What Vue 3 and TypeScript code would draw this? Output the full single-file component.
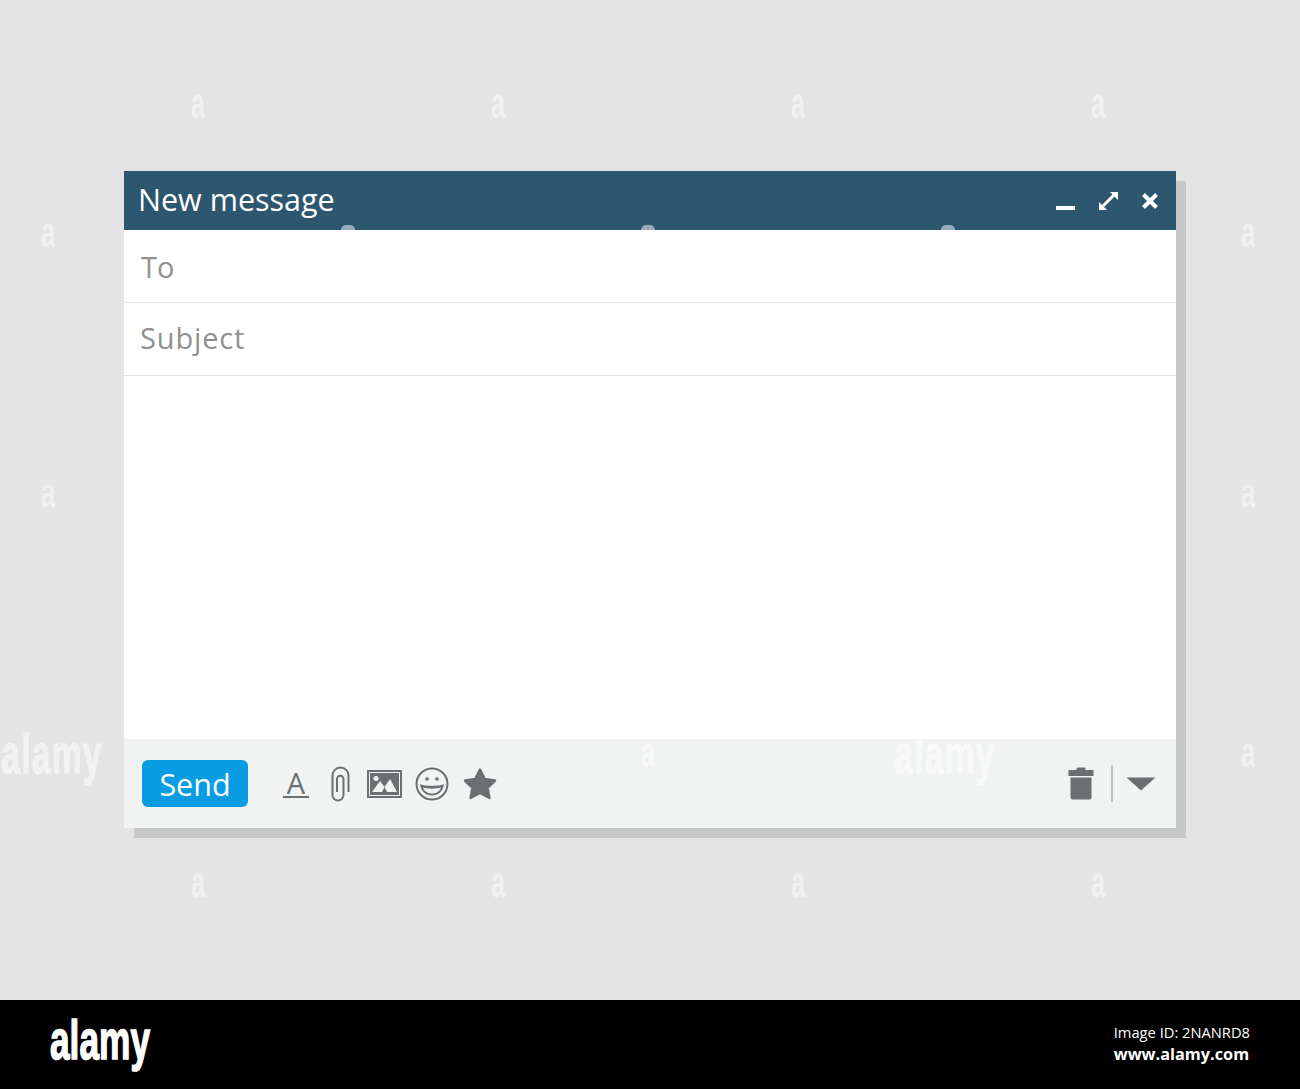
<script setup lang="ts">
interface Mark { x: number; y: number; label: string; size: number; word: boolean }
const small: [number, number][] = [
  [198, 108], [498, 108], [798, 108], [1098, 108],
  [48, 237], [1248, 237], [48, 497], [1248, 497],
  [648, 757], [1248, 757],
  [198, 887], [498, 887], [798, 887], [1098, 887],
]
const marks: Mark[] = [
  ...small.map(([x, y]) => ({ x, y: y - 4, label: 'a', size: 42, word: false })),
  { x: 52, y: 754, label: 'alamy', size: 56, word: true },
  { x: 945, y: 754, label: 'alamy', size: 56, word: true },
]
const markStyle = (m: Mark) => ({ left: `${m.x}px`, top: `${m.y}px`, fontSize: `${m.size}px` })
const dots: number[] = [217, 517, 817]
const dotStyle = (x: number) => ({ left: `${x}px` })
</script>

<template>
  <div class="page">
    <main class="stage">
      <section class="window">
        <header class="titlebar">
          <h1 class="title">New message</h1>
          <span v-for="x in dots" :key="x" class="dot" :style="dotStyle(x)"></span>
          <div class="controls">
            <svg width="20" height="20" viewBox="0 0 20 20"><rect x="0" y="15" width="19" height="4" fill="#fff" /></svg>
            <svg width="22" height="20" viewBox="0 0 22 20">
              <path d="M5 15 16 4" stroke="#fff" stroke-width="3" fill="none" />
              <path d="M12 1h8v8zM1 19v-8l8 8z" fill="#fff" />
            </svg>
            <svg class="close" width="18" height="20" viewBox="0 0 18 20">
              <path d="M2.500 3.500 15.500 16.500M15.500 3.500 2.500 16.500" stroke="#fff" stroke-width="4" fill="none" />
            </svg>
          </div>
        </header>
        <div class="field">To</div>
        <div class="field field-subject">Subject</div>
        <div class="body"></div>
        <footer class="toolbar">
          <button class="send">Send</button>
          <div class="tools">
            <span class="font-icon">A</span>
            <svg class="clip" width="20" height="36" viewBox="0 0 20 36">
              <path d="M18.500 26V9.500a8 8 0 0 0-16 0V29a5.500 5.500 0 0 0 11 0V13a3.250 3.250 0 0 0-6.500 0V26" fill="none" stroke="#6d6e71" stroke-width="2" />
            </svg>
            <svg width="35" height="28" viewBox="0 0 35 28">
              <rect width="35" height="28" fill="#6d6e71" />
              <rect x="2.500" y="2.500" width="30" height="23" fill="none" stroke="#f1f3f3" stroke-width="1" />
              <circle cx="9" cy="8.500" r="2.500" fill="#f1f3f3" />
              <path d="M5 22 13 11 17.500 17 23 9 30 22z" fill="#f1f3f3" />
              <path d="M15 22 17.500 17 20 22z" fill="#6d6e71" />
            </svg>
            <svg width="34" height="34" viewBox="0 0 34 34">
              <circle cx="17" cy="17" r="15.500" fill="none" stroke="#6d6e71" stroke-width="2" />
              <circle cx="12" cy="12" r="1.800" fill="#6d6e71" />
              <circle cx="22" cy="12" r="1.800" fill="#6d6e71" />
              <path d="M5 17C9 19.500 25 19.500 29 17 28 25 22.500 28.500 17 28.500S6 25 5 17z" fill="#6d6e71" />
              <path d="M8 20.500C12 22 22 22 26 20.500 24.500 24.500 21 26.500 17 26.500S9.500 24.500 8 20.500z" fill="#f1f3f3" />
            </svg>
            <svg width="36" height="34" viewBox="0 0 36 34">
              <path d="M18 2.500 22.800 12 33 13.500 25.500 20.800 27.500 31 18 26 8.500 31 10.500 20.800 3 13.500 13.200 12z" fill="#6d6e71" stroke="#6d6e71" stroke-width="2.500" stroke-linejoin="round" />
            </svg>
          </div>
          <div class="actions">
            <svg width="26" height="33" viewBox="0 0 26 33">
              <path d="M8.500 3V1.500Q8.500 0.500 10 0.500H16Q17.500 0.500 17.500 1.500V3H25.500V9H0.500V3z" fill="#6d6e71" />
              <path d="M2.500 10.500H23.500V30.500Q23.500 32.500 21.500 32.500H4.500Q2.500 32.500 2.500 30.500z" fill="#6d6e71" />
            </svg>
            <span class="divider"></span>
            <svg width="30" height="14" viewBox="0 0 30 14"><path d="M0.500 0.500H29.500L15 13.500z" fill="#6d6e71" /></svg>
          </div>
        </footer>
      </section>
    </main>
    <footer class="credit">
      <span class="logo">alamy</span>
      <div class="credit-text">
        <span>Image ID: 2NANRD8</span>
        <strong>www.alamy.com</strong>
      </div>
    </footer>
    <span
      v-for="(m, i) in marks"
      :key="i"
      class="mark"
      :class="{ 'mark-word': m.word }"
      :style="markStyle(m)"
    >{{ m.label }}</span>
  </div>
</template>

<style>
html, body { margin: 0; background: #e4e4e4; }
</style>

<style scoped>
.page {
  position: relative;
  width: 1300px;
  height: 1089px;
  overflow: hidden;
  display: flex;
  flex-direction: column;
  font-family: "Open Sans", "Noto Sans", sans-serif;
}
.stage {
  height: 1000px;
  box-sizing: border-box;
  padding: 171px 0 0 124px;
  background: #e4e4e4;
}
.window {
  width: 1052px;
  height: 657px;
  display: flex;
  flex-direction: column;
  background: #fff;
  box-shadow: 10px 10px 0 #c6c7c8;
}
.titlebar {
  position: relative;
  height: 59px;
  flex: none;
  display: flex;
  align-items: center;
  justify-content: space-between;
  padding: 0 17px 0 14px;
  background: #2d566f;
}
.title {
  margin: -3px 0 0;
  font-size: 30.500px;
  font-weight: 400;
  color: #fff;
}
.dot {
  position: absolute;
  bottom: 0;
  width: 14px;
  height: 5px;
  border-radius: 7px 7px 0 0;
  background: #98abb9;
}
.controls {
  display: flex;
  align-items: center;
  gap: 22px;
}
.close { margin-left: -1px; }
.field {
  height: 72px;
  flex: none;
  display: flex;
  align-items: center;
  padding-left: 17px;
  border-bottom: 1px solid #e2e3e3;
  font-size: 29px;
  color: #8f9092;
}
.field-subject {
  height: 68px;
  padding: 0 0 4px 16px;
  letter-spacing: 0.85px;
}
.body { flex: 1; }
.toolbar {
  height: 89px;
  flex: none;
  display: flex;
  align-items: center;
  padding: 0 20px 0 18px;
  background: #f1f3f3;
}
.send {
  width: 106px;
  height: 47px;
  padding: 0;
  border: 0;
  border-radius: 6px;
  background: #0a9ce2;
  color: #fff;
  font: 400 30.500px "Open Sans", "Noto Sans", sans-serif;
}
.tools {
  display: flex;
  align-items: center;
  gap: 13px;
  margin-left: 35px;
}
.font-icon {
  width: 26px;
  height: 30px;
  box-sizing: border-box;
  border-bottom: 2px solid #6d6e71;
  text-align: center;
  font-size: 29px;
  line-height: 30px;
  font-weight: 400;
  color: #6d6e71;
  margin-top: -2px;
}
.clip { margin-left: 8px; margin-right: 4px; }
.actions {
  margin-left: auto;
  display: flex;
  align-items: center;
  gap: 17px;
}
.divider {
  width: 2px;
  height: 37px;
  margin-right: -4px;
  background: #bcbebf;
}
.credit {
  height: 89px;
  flex: none;
  display: flex;
  align-items: center;
  justify-content: space-between;
  padding: 0 50px;
  background: #000;
  color: #fff;
}
.logo {
  display: inline-block;
  width: 101px;
  margin-bottom: 10px;
  font: 700 56px/1 "Liberation Sans", sans-serif;
  -webkit-text-stroke: 1.500px #fff;
  transform: scaleX(0.63);
  transform-origin: left center;
  white-space: nowrap;
}
.credit-text {
  display: flex;
  flex-direction: column;
  gap: 4px;
  font-size: 14.700px;
  line-height: 18px;
  margin-top: -4px;
}
.credit-text strong { font-size: 16.300px; font-weight: 700; }
.mark {
  position: absolute;
  transform: translate(-50%, -50%) scaleX(0.6);
  font-family: "Liberation Sans", sans-serif;
  font-weight: 700;
  line-height: 1;
  color: rgba(255, 255, 255, 0.5);
  pointer-events: none;
}
.mark-word {
  letter-spacing: 2px;
  -webkit-text-stroke: 1px rgba(255, 255, 255, 0.5);
}
</style>
